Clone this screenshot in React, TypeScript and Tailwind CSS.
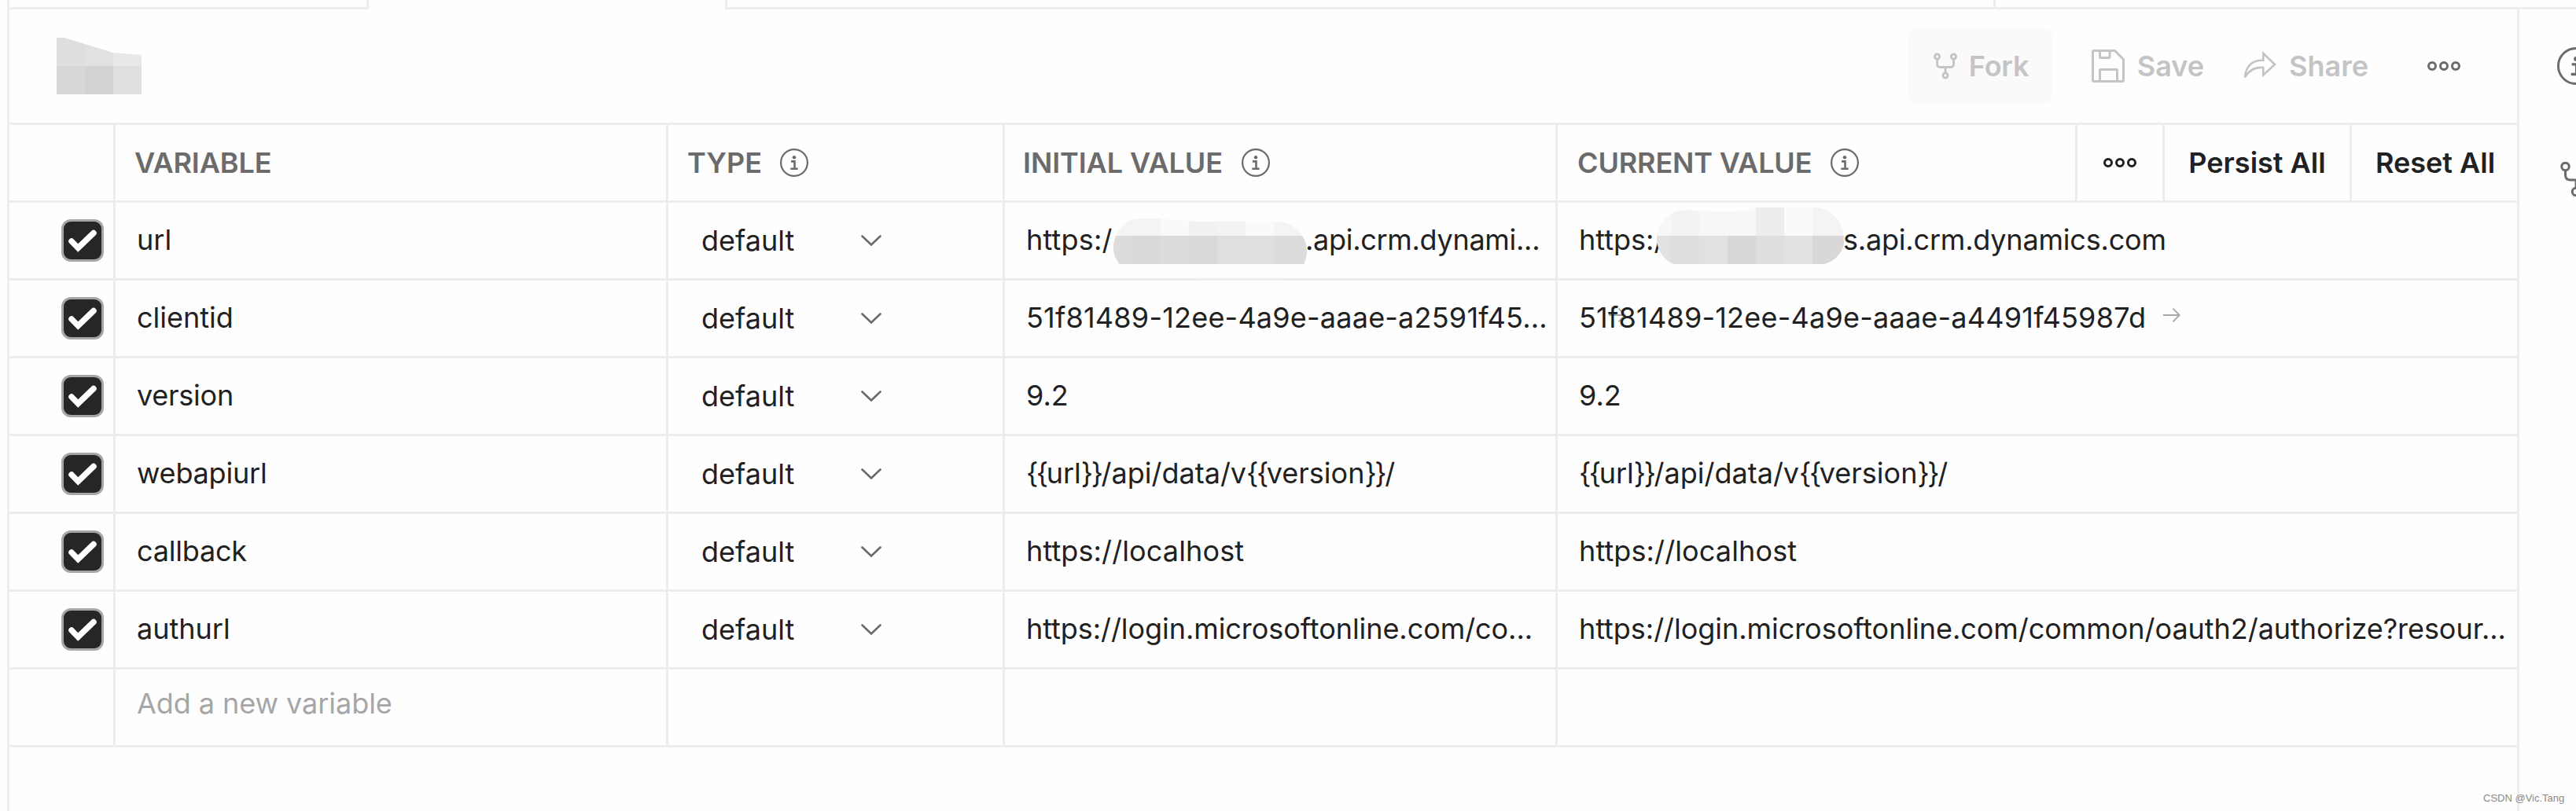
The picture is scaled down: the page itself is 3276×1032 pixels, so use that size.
import React from "react";
import type { ReactNode } from "react";

const LINE = "border-[#ededed]";

type Row = { name: string; initial: ReactNode; current: ReactNode; nameStyle?: string };

function Brace({ children }: { children: ReactNode }) {
  return <span className="tracking-[-2.5px]">{children}</span>;
}

function ApiPath() {
  return (
    <span>
      <Brace>{"{{"}</Brace>url<Brace>{"}}"}</Brace>/api/data/v<Brace>{"{{"}</Brace>version<Brace>{"}}"}</Brace>/
    </span>
  );
}

const rows: Row[] = [
  {
    name: "url",
    initial: (
      <>
        <span className="w-[355px] tracking-[0.2px]">https:/</span>
        <span className="tracking-[-0.3px]">.api.crm.dynami...</span>
        <InitialMask />
      </>
    ),
    current: (
      <>
        <span className="w-[336px]">https:/</span>
        <span className="tracking-[-0.2px]">s.api.crm.dynamics.com</span>
        <CurrentMask />
      </>
    ),
  },
  {
    name: "clientid",
    initial: <span className="tracking-[0.22px]">51f81489-12ee-4a9e-aaae-a2591f45...</span>,
    current: (
      <>
        <Arrow className="absolute left-[65px] top-[35px] h-[18px] w-[22px]" />
        <span className="relative tracking-[0.23px]">51f81489-12ee-4a9e-aaae-a4491f45987d</span>
        <Arrow className="mb-[7px] ml-[22px] h-[18px] w-[22px]" />
      </>
    ),
  },
  { name: "version", initial: "9.2", current: "9.2", nameStyle: "tracking-[-0.25px]" },
  { name: "webapiurl", initial: <ApiPath />, current: <ApiPath />, nameStyle: "tracking-[-0.2px]" },
  {
    name: "callback",
    initial: <span className="tracking-[0.12px]">https://localhost</span>,
    current: <span className="tracking-[0.12px]">https://localhost</span>,
    nameStyle: "tracking-[-0.2px]",
  },
  {
    name: "authurl",
    initial: <span className="tracking-[-0.06px]">https://login.microsoftonline.com/co...</span>,
    current: <span className="tracking-[-0.04px]">https://login.microsoftonline.com/common/oauth2/authorize?resour...</span>,
  },
];

function InfoIcon({ className }: { className: string }) {
  return (
    <svg viewBox="0 0 36 36" className={className} fill="none" stroke="currentColor" strokeWidth="2.2">
      <circle cx="18" cy="18" r="16.9" />
      <circle cx="18" cy="11.2" r="2.2" fill="currentColor" stroke="none" />
      <path d="M14 16.400h4.500v9M13.300 25.800h9.400" strokeWidth="2.6" />
    </svg>
  );
}

function ForkIcon({ className }: { className: string }) {
  return (
    <svg viewBox="0 0 30 34" className={className} fill="none" stroke="currentColor" strokeWidth="2.8">
      <circle cx="4.5" cy="5" r="3.1" />
      <circle cx="25.5" cy="5" r="3.1" />
      <circle cx="15" cy="29" r="3.1" />
      <path d="M4.500 8v6.500q0 4 4 4h13q4 0 4-4V8M15 18.500V26" />
    </svg>
  );
}

function PanelForkIcon({ className }: { className: string }) {
  return (
    <svg viewBox="0 0 40 44" className={className} fill="none" stroke="currentColor" strokeWidth="3">
      <circle cx="6.5" cy="6" r="4.7" />
      <circle cx="33.5" cy="6" r="4.7" />
      <circle cx="20" cy="38" r="4.7" />
      <path d="M6.500 10.500v6q0 6.500 6.500 6.500h14q6.500 0 6.500-6.500v-6M20 23v10.500" />
    </svg>
  );
}

function Dots({ className }: { className: string }) {
  return (
    <svg viewBox="0 0 42 12" className={className} fill="none" stroke="currentColor" strokeWidth="3">
      <circle cx="6" cy="6" r="4.5" />
      <circle cx="21" cy="6" r="4.5" />
      <circle cx="36" cy="6" r="4.5" />
    </svg>
  );
}

function SaveIcon() {
  return (
    <svg viewBox="0 0 42 42" className="h-[42px] w-[42px]" fill="none" stroke="currentColor" strokeWidth="3">
      <path d="M1.500 3q0-1.500 1.500-1.500h26.500l11 11v26.500q0 1.500-1.500 1.500h-36q-1.500 0-1.500-1.500z" />
      <path d="M10.500 1.500v8q0 1 1 1h10.500q1 0 1-1v-8M10.500 40v-13.500q0-1 1-1h20q1 0 1 1v13.500" />
    </svg>
  );
}

function ShareIcon() {
  return (
    <svg viewBox="0 0 42 40" className="h-10 w-[42px]" fill="none" stroke="currentColor" strokeWidth="2.6">
      <path d="M25.300 4l14.700 14-14.700 13.500v-9.500c-11-.8-18 3-23.500 12.500 1.500-14 9-22.300 23.500-21.800z" />
    </svg>
  );
}

function Checkbox() {
  return (
    <span className="flex size-[54px] items-center justify-center rounded-[12px] border-[3px] border-[#a6a6a6] bg-[#262626]">
      <svg viewBox="0 0 48 48" className="size-12" fill="none" stroke="#fff" strokeWidth="7.5" strokeLinecap="round">
        <path d="M10 25l8.300 8.500L38 14.500" />
      </svg>
    </span>
  );
}

function Arrow({ className }: { className: string }) {
  return (
    <svg viewBox="0 0 22 18" className={className} fill="none" stroke="#a6a6a6" strokeWidth="1.8">
      <path d="M0 9h20.500M12.500 .7l8.300 8.300-8.300 8.300" />
    </svg>
  );
}

function TitleMask() {
  return (
    <svg viewBox="0 0 145 72" className="h-[72px] w-[145px]">
      <path d="M37 0C-12 8-12 64 37 72z" fill="#fefefc" />
      <path d="M37 0h10l26 8v28H37z" fill="#dddfde" />
      <path d="M73 8l36 11v17H73z" fill="#e1e1e1" />
      <path d="M109 19l36 3v14h-36z" fill="#e8e8e8" />
      <path d="M37 36h36v36H37z" fill="#d7d9d8" />
      <path d="M73 36h36v36H73z" fill="#d3d3d3" />
      <path d="M109 36h36v36h-36z" fill="#dfdfdf" />
    </svg>
  );
}

function InitialMask() {
  return (
    <svg viewBox="0 0 246 78" className="absolute left-[138px] top-5 h-[78px] w-[246px]">
      <defs>
        <clipPath id="initial-mask">
          <path d="M34 0h25c30 1 30 4 55 4h94c25 0 38 22 38 36 0 21-12 36-36 36h-80c-30 0-40-5-96-5C12 71 0 52 0 37 0 19 14 0 34 0z" />
        </clipPath>
      </defs>
      <g clipPath="url(#initial-mask)">
        <path d="M0 0h246v78H0z" fill="#fdfdfd" />
        <path d="M0 0h60v22H0z" fill="#f4f4f4" />
        <path d="M60 0h36v22H60z" fill="#fafafa" />
        <path d="M96 0h36v22H96z" fill="#f1f1f1" />
        <path d="M132 0h36v22h-36z" fill="#f3f3f3" />
        <path d="M168 0h36v22h-36z" fill="#fafafa" />
        <path d="M204 0h42v22h-42z" fill="#f4f4f4" />
        <path d="M0 22h246v36H0z" fill="#dcdcdc" />
        <path d="M24 22h36v36H24zM96 22h36v36H96z" fill="#d9d9d9" />
        <path d="M132 22h72v36h-72z" fill="#dfdfdf" />
      </g>
    </svg>
  );
}

function CurrentMask() {
  return (
    <svg viewBox="0 0 238 80" className="absolute left-[126px] top-1.5 h-20 w-[238px]">
      <defs>
        <clipPath id="current-mask">
          <path d="M30 4c12-2 22 1 37 1h35c12 0 14-5 28-5h70c22 0 38 20 38 42 0 15-12 27-26 30H22C12 69 0 56 0 40 0 22 14 6 30 4z" />
        </clipPath>
      </defs>
      <g clipPath="url(#current-mask)">
        <path d="M0 0h238v36H0z" fill="#f8f8f8" />
        <path d="M18 0h36v36H18z" fill="#f3f3f3" />
        <path d="M126 0h36v36h-36z" fill="#ededed" />
        <path d="M162 0h36v36h-36z" fill="#fafafa" />
        <path d="M198 0h40v36h-40z" fill="#f4f4f4" />
        <path d="M0 36h238v36H0z" fill="#e1e1e1" />
        <path d="M18 36h36v36H18zM126 36h36v36h-36z" fill="#dedede" />
        <path d="M90 36h36v36H90zM198 36h40v36h-40z" fill="#d8d8d8" />
      </g>
    </svg>
  );
}

const GRID = "grid grid-cols-[135px_703px_428px_703px_1fr]";

export default function App() {
  return (
    <div className="relative flex h-[1032px] w-[3276px] flex-col overflow-hidden bg-[#fefefe] font-['Inter',sans-serif] text-[36px] leading-[44px] text-[#212121]">
      <div className="flex h-3 shrink-0 pl-[9px]">
        <div className={`w-[460px] border-b-[3px] border-l-[3px] border-r-[3px] ${LINE}`} />
        <div className="w-[453px]" />
        <div className={`w-[1616px] border-b-[3px] border-l-[3px] border-r-[3px] ${LINE}`} />
        <div className={`flex-1 border-b-[3px] ${LINE}`} />
      </div>
      <div className="flex flex-1 pl-[9px]">
        <main className={`flex w-[3195px] shrink-0 flex-col border-l-[3px] border-r-[3px] ${LINE}`}>
          <header className="flex h-[144px] shrink-0 items-center justify-between pl-[23px] pr-[72px] font-semibold text-[#c4c4c4]">
            <TitleMask />
            <div className="flex items-center">
              <div className="flex h-24 w-[184px] items-center rounded-[12px] bg-[#fafafa] pl-[33px]">
                <ForkIcon className="h-[34px] w-[30px]" />
                <span className="ml-[15px] tracking-[-0.2px]">Fork</span>
              </div>
              <div className="ml-[50px] flex items-center">
                <SaveIcon />
                <span className="ml-4">Save</span>
              </div>
              <div className="ml-[50px] flex items-center">
                <ShareIcon />
                <span className="ml-4">Share</span>
              </div>
              <Dots className="ml-[75px] h-3 w-[42px] text-[#6b6b6b]" />
            </div>
          </header>

          <div className={`${GRID} h-[102px] shrink-0 border-y-[3px] font-semibold text-[#6b6b6b] ${LINE}`}>
            <div className={`border-r-[3px] ${LINE}`} />
            <div className={`flex items-center border-r-[3px] pl-6 tracking-[-0.1px] ${LINE}`}>VARIABLE</div>
            <div className={`flex items-center border-r-[3px] pl-6 ${LINE}`}>
              TYPE
              <InfoIcon className="ml-[23px] size-9" />
            </div>
            <div className={`flex items-center border-r-[3px] pl-[23px] tracking-[-0.08px] ${LINE}`}>
              INITIAL VALUE
              <InfoIcon className="ml-6 size-9" />
            </div>
            <div className="flex">
              <div className="flex flex-1 items-center pl-[25px] tracking-[-0.15px]">
                CURRENT VALUE
                <InfoIcon className="ml-6 size-9" />
              </div>
              <div className={`flex w-[111px] items-center justify-center border-l-[3px] text-[#212121] ${LINE}`}>
                <Dots className="h-3 w-[42px]" />
              </div>
              <div className={`flex w-[238px] items-center justify-center border-l-[3px] text-[#212121] ${LINE}`}>Persist All</div>
              <div className={`flex w-[213px] items-center justify-center border-l-[3px] pl-0.5 text-[#212121] ${LINE}`}>Reset All</div>
            </div>
          </div>

          {rows.map((row) => (
            <div key={row.name} className={`${GRID} h-[99px] shrink-0 whitespace-nowrap border-b-[3px] ${LINE}`}>
              <div className={`flex items-center justify-end border-r-[3px] pr-3 ${LINE}`}>
                <Checkbox />
              </div>
              <div className={`flex items-center border-r-[3px] pb-0.5 pl-[27px] ${LINE}`}>
                <span className={row.nameStyle}>{row.name}</span>
              </div>
              <div className={`flex items-center border-r-[3px] pl-[42px] ${LINE}`}>
                <span className="w-[203px]">default</span>
                <svg viewBox="0 0 26 14" className="h-3.5 w-[26px]" fill="none" stroke="#6b6b6b" strokeWidth="2.6" strokeLinecap="round">
                  <path d="M1.500 1.500l11.500 11 11.500-11" />
                </svg>
              </div>
              <div className={`relative flex items-center border-r-[3px] pb-0.5 pl-[27px] ${LINE}`}>{row.initial}</div>
              <div className="relative flex items-center pb-0.5 pl-[27px]">{row.current}</div>
            </div>
          ))}

          <div className={`${GRID} h-[99px] shrink-0 border-b-[3px] text-[#a6a6a6] ${LINE}`}>
            <div className={`border-r-[3px] ${LINE}`} />
            <div className={`flex items-center border-r-[3px] pb-2.5 pl-[27px] tracking-[-0.05px] ${LINE}`}>Add a new variable</div>
            <div className={`border-r-[3px] ${LINE}`} />
            <div className={`border-r-[3px] ${LINE}`} />
            <div />
          </div>
        </main>
        <aside className="flex w-[72px] shrink-0 flex-col overflow-hidden pl-12 pt-12 text-[#6b6b6b]">
          <InfoIcon className="size-12 shrink-0" />
          <PanelForkIcon className="ml-1 mt-[98px] h-11 w-10 shrink-0" />
        </aside>
      </div>
      <span className="absolute left-[3158px] top-[1006px] whitespace-nowrap font-['Liberation_Sans',sans-serif] text-[13px] leading-5 text-[#888]">
        CSDN @Vic.Tang
      </span>
    </div>
  );
}
